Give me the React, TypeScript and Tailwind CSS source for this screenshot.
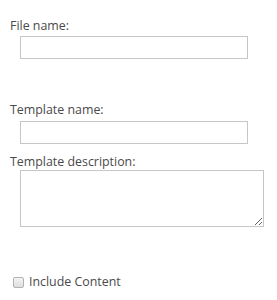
import React from 'react'

const labelCls = "block text-[12.4px] leading-[16px] text-[#4a4a4a]"

export default function App() {
  return (
    <div className="w-[277px] h-[300px] bg-white pl-[10px] pt-[18px] font-['Segoe_UI','Open_Sans',sans-serif]">
      {/* File name */}
      <label className={labelCls}>File name:</label>
      <input
        type="text"
        className="mt-[2px] ml-[10px] block w-[228px] h-[23px] border border-[#c6c6c6] bg-white outline-none"
      />

      {/* Template name */}
      <label className={`${labelCls} mt-[43px]`}>Template name:</label>
      <input
        type="text"
        className="mt-[3px] ml-[10px] block w-[228px] h-[23px] border border-[#c6c6c6] bg-white outline-none"
      />

      {/* Template description */}
      <label className={`${labelCls} mt-[10px]`}>Template description:</label>
      <textarea className="mt-[0px] ml-[10px] block w-[244px] h-[57px] border border-[#c6c6c6] bg-white outline-none" />

      {/* Include content */}
      <div className="mt-[47px] flex items-center gap-[5px] pl-[3px]">
        <span className="block w-[11px] h-[11px] rounded-[2px] border border-[#b3b3b3] bg-gradient-to-b from-[#f4f4f4] to-[#dedede]" />
        <span className="text-[12.4px] leading-[16px] text-[#4a4a4a]">Include Content</span>
      </div>
    </div>
  )
}
